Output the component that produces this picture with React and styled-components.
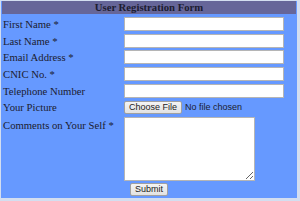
import React from "react";
import styled, { createGlobalStyle } from "styled-components";

const Global = createGlobalStyle`
  html, body { margin: 0; padding: 0; }
  body {
    background: #d3def0;
    width: 300px;
    height: 201px;
    overflow: hidden;
    font-family: "Liberation Serif", "Times New Roman", serif;
  }
`;

const Frame = styled.div`
  padding: 1px 0 0 1px;
`;

const Form = styled.form`
  width: 292px;
  height: 197px;
  box-sizing: border-box;
  background: #6699ff;
  padding: 0 2px;
  display: grid;
  grid-template-columns: 121px 1fr;
  grid-template-rows: 13px repeat(5, 14px) 13px 64px 13px;
  row-gap: 2.8px;
  align-items: center;
  color: #1c1c30;
  font-size: 10.7px;
  width: 296px;
`;

const Header = styled.div`
  grid-column: 1 / -1;
  height: 13px;
  margin: 0 -1px;
  background: #666699;
  text-align: center;
  font-weight: bold;
  font-size: 10.7px;
  line-height: 13px;
`;

const Label = styled.label`
  line-height: 14px;
  white-space: nowrap;
  align-self: ${(p) => (p.$top ? "start" : "center")};
  padding-top: ${(p) => (p.$top ? "1px" : "0")};
`;

const TextInput = styled.input`
  box-sizing: border-box;
  width: 160px;
  height: 14px;
  margin: 0;
  border: 1px solid #b5b5b5;
  background: #fff;
  padding: 0 2px;
  font-size: 9px;
`;

const FileRow = styled.div`
  display: flex;
  align-items: center;
  gap: 3px;
  font-family: "Liberation Sans", Arial, sans-serif;
  font-size: 9px;
`;

const GreyButton = styled.button`
  box-sizing: border-box;
  height: 13px;
  margin: 0;
  padding: 0 4px;
  border: 1px solid #a0a0a0;
  border-radius: 2px;
  background: linear-gradient(#f4f4f4, #e2e2e2);
  color: #222;
  font-family: "Liberation Sans", Arial, sans-serif;
  font-size: 9px;
  line-height: 11px;
`;

const FileStatus = styled.span`
  color: #1c1c30;
`;

const Comments = styled.textarea`
  box-sizing: border-box;
  width: 131px;
  height: 64px;
  margin: 0;
  border: 1px solid #b5b5b5;
  background: #fff;
`;

const SubmitCell = styled.div`
  grid-column: 1 / -1;
  display: flex;
  justify-content: center;
`;

const fields = [
  "First Name *",
  "Last Name *",
  "Email Address *",
  "CNIC No. *",
  "Telephone Number",
];

export default function App() {
  return (
    <>
      <Global />
      <Frame>
        <Form onSubmit={(e) => e.preventDefault()}>
          <Header>User Registration Form</Header>
          {fields.map((f) => (
            <React.Fragment key={f}>
              <Label>{f}</Label>
              <TextInput type="text" />
            </React.Fragment>
          ))}
          <Label>Your Picture</Label>
          <FileRow>
            <GreyButton type="button">Choose File</GreyButton>
            <FileStatus>No file chosen</FileStatus>
          </FileRow>
          <Label $top>Comments on Your Self *</Label>
          <Comments />
          <SubmitCell>
            <GreyButton type="submit">Submit</GreyButton>
          </SubmitCell>
        </Form>
      </Frame>
    </>
  );
}
